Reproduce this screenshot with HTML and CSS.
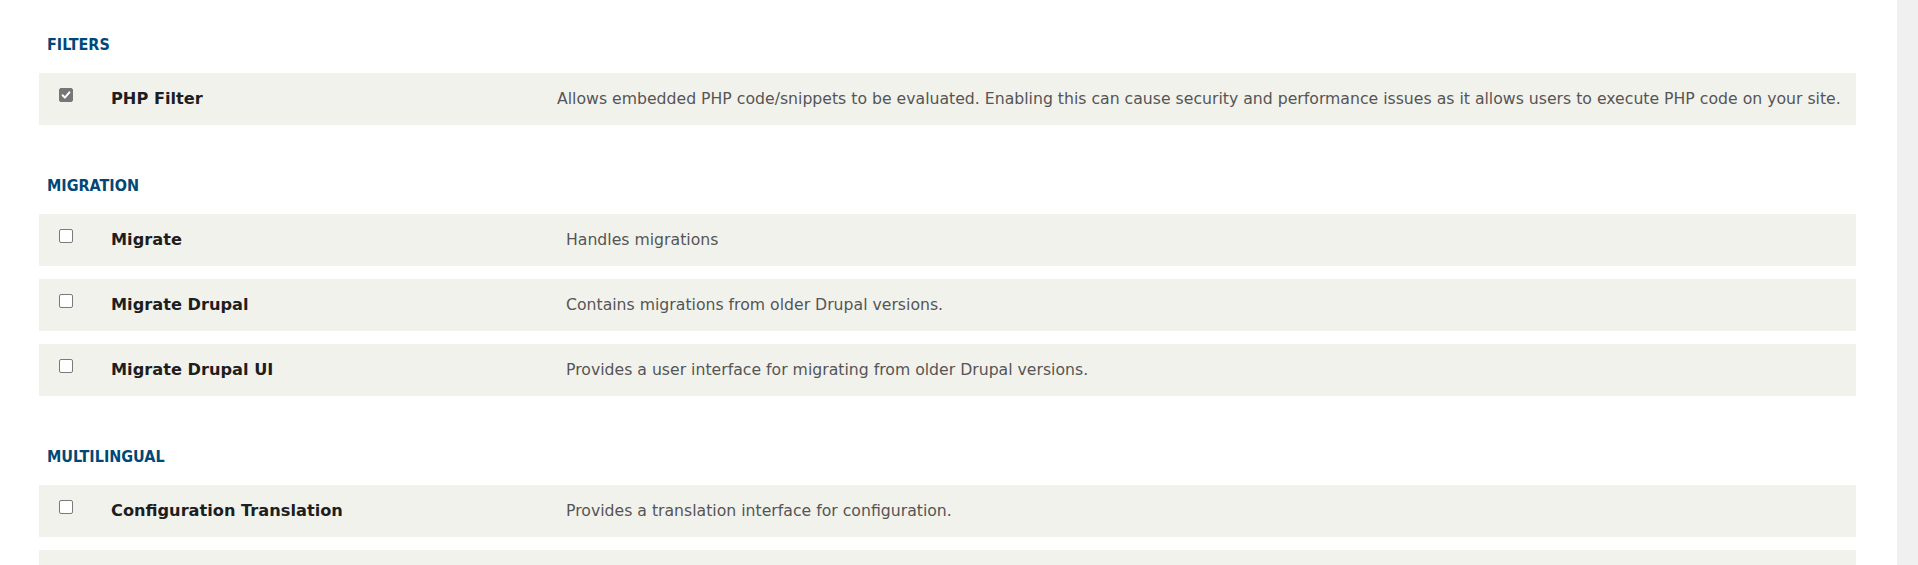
FILE: index.html
```html
<!DOCTYPE html>
<html lang="en">
<head>
<meta charset="utf-8">
<title>Extend</title>
<link rel="stylesheet" href="styles.css">
</head>
<body>
<div class="page">
  <main class="content">
    <section class="package package--first">
      <h3 class="package-title">FILTERS</h3>
      <div class="modules modules--filters">
        <div class="module">
          <span class="check check--on check--disabled"><svg viewBox="0 0 14 14" width="14" height="14"><path d="M3.6 7.2 L5.9 9.6 L10.4 4.3" fill="none" stroke="#fff" stroke-width="2" stroke-linecap="round" stroke-linejoin="round"/></svg></span>
          <span class="module-name">PHP Filter</span>
          <span class="module-desc">Allows embedded PHP code/snippets to be evaluated. Enabling this can cause security and performance issues as it allows users to execute PHP code on your site.</span>
        </div>
      </div>
    </section>

    <section class="package">
      <h3 class="package-title">MIGRATION</h3>
      <div class="modules">
        <div class="module">
          <span class="check"></span>
          <span class="module-name">Migrate</span>
          <span class="module-desc">Handles migrations</span>
        </div>
        <div class="module">
          <span class="check"></span>
          <span class="module-name">Migrate Drupal</span>
          <span class="module-desc">Contains migrations from older Drupal versions.</span>
        </div>
        <div class="module">
          <span class="check"></span>
          <span class="module-name">Migrate Drupal UI</span>
          <span class="module-desc">Provides a user interface for migrating from older Drupal versions.</span>
        </div>
      </div>
    </section>

    <section class="package">
      <h3 class="package-title">MULTILINGUAL</h3>
      <div class="modules">
        <div class="module">
          <span class="check"></span>
          <span class="module-name">Configuration Translation</span>
          <span class="module-desc">Provides a translation interface for configuration.</span>
        </div>
        <div class="module">
          <span class="check"></span>
          <span class="module-name">Content Translation</span>
          <span class="module-desc">Allows users to translate content entities.</span>
        </div>
      </div>
    </section>
  </main>
  <div class="scrollbar"></div>
</div>
</body>
</html>
```

FILE: styles.css
```css
html, body {
  margin: 0;
  padding: 0;
  background: #fff;
  height: 100%;
  overflow: hidden;
}

body {
  font-family: "DejaVu Sans", "Liberation Sans", sans-serif;
  color: #222;
}

.page {
  display: flex;
  min-height: 565px;
}

.content {
  flex: 1;
  padding: 35px 41px 0 39px;
  min-width: 0;
}

.scrollbar {
  width: 21px;
  flex: none;
  background: #f0f0f0;
}

.package {
  margin-top: 51px;
}

.package--first {
  margin-top: 0;
}

.package-title {
  margin: 0 0 18px;
  padding-left: 8px;
  font-family: "DejaVu Sans Condensed", "DejaVu Sans", sans-serif;
  font-weight: bold;
  font-size: 16px;
  line-height: 20px;
  color: #004875;
}

.modules {
  display: flex;
  flex-direction: column;
  gap: 13px;
}

.module {
  display: grid;
  grid-template-columns: 52px 455px 1fr;
  align-items: start;
  height: 52px;
  box-sizing: border-box;
  padding: 15px 12px 0 20px;
  background: #f2f2ed;
}

.modules--filters .module {
  grid-template-columns: 52px 446px 1fr;
}

.check {
  display: block;
  width: 14px;
  height: 14px;
  box-sizing: border-box;
  border: 1px solid #7a7a7a;
  border-radius: 2px;
  background: #fff;
}

.check svg {
  display: block;
  margin: -1px;
}

.check--on {
  background: #767676;
  border-color: #767676;
}

.module-name {
  font-weight: bold;
  font-size: 16.2px;
  line-height: 21px;
  color: #1e1e1e;
  white-space: nowrap;
}

.module-desc {
  font-size: 15.7px;
  line-height: 21px;
  color: #555;
  white-space: nowrap;
}
```
